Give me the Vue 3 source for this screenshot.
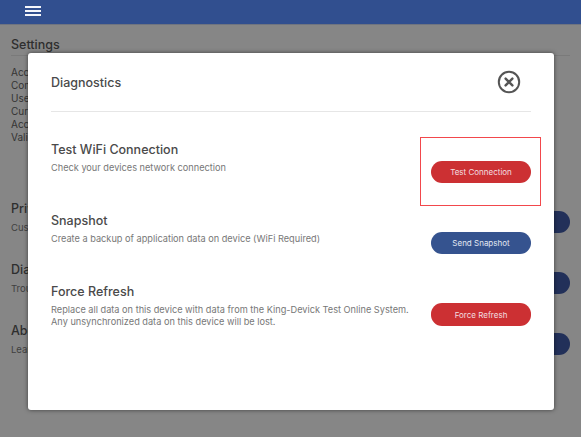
<script setup>
const bgRows = ['Account:', 'Company:', 'User:', 'Current Version:', 'Account Type:', 'Valid Until:']
const bgSections = [
  { title: 'Privacy', text: 'Customize privacy settings' },
  { title: 'Diagnostics', text: 'Troubleshoot your device' },
  { title: 'About', text: 'Learn more about this app' },
]
</script>

<template>
  <div class="page">
    <header class="topbar">
      <div class="burger"><span></span><span></span><span></span></div>
    </header>
    <main class="settings">
      <h1>Settings</h1>
      <ul class="info">
        <li v-for="r in bgRows" :key="r">{{ r }}</li>
      </ul>
      <section v-for="s in bgSections" :key="s.title" class="bg-section">
        <div>
          <h2>{{ s.title }}</h2>
          <p>{{ s.text }}</p>
        </div>
        <span class="bg-btn"></span>
      </section>
    </main>

    <div class="modal">
      <div class="modal-head">
        <h3>Diagnostics</h3>
        <svg class="close" width="24" height="24" viewBox="0 0 24 24" fill="none">
          <circle cx="12" cy="12" r="10.2" stroke="#555" stroke-width="2" />
          <path d="M8.6 8.6 15.4 15.4M15.4 8.6 8.6 15.4" stroke="#555" stroke-width="2.4" stroke-linecap="round" />
        </svg>
      </div>
      <div class="rows">
        <div class="row">
          <div class="copy">
            <h4>Test WiFi Connection</h4>
            <p>Check your devices network connection</p>
          </div>
          <div class="action">
            <button class="red">Test Connection</button>
            <span class="callout"></span>
          </div>
        </div>
        <div class="row">
          <div class="copy">
            <h4>Snapshot</h4>
            <p>Create a backup of application data on device (WiFi Required)</p>
          </div>
          <div class="action">
            <button class="blue">Send Snapshot</button>
          </div>
        </div>
        <div class="row">
          <div class="copy">
            <h4>Force Refresh</h4>
            <p>Replace all data on this device with data from the King-Devick Test Online System.<br />Any unsynchronized data on this device will be lost.</p>
          </div>
          <div class="action">
            <button class="red tall">Force Refresh</button>
          </div>
        </div>
      </div>
    </div>
  </div>
</template>

<style scoped>
.page {
  position: relative;
  width: 581px;
  height: 437px;
  overflow: hidden;
  background: #868686;
  font-family: Inter, "Liberation Sans", sans-serif;
  color: #2f2f2f;
}
h1, h2, h3, h4, p, ul { margin: 0; padding: 0; }
.topbar {
  height: 25px;
  background: #314f8f;
  border-bottom: 1px solid #6f7480;
  box-sizing: border-box;
  display: flex;
  align-items: center;
  padding-left: 25px;
}
.burger {
  width: 16px;
  display: flex;
  flex-direction: column;
  gap: 2px;
  margin-top: -2px;
}
.burger span { height: 2px; background: #f4f6fb; }
.settings { padding: 12px 11px 0; }
.settings h1 {
  font-size: 12.5px;
  font-weight: 500;
  line-height: 15px;
  color: #2e2e2e;
  padding-bottom: 3px;
  border-bottom: 1px solid #7a7a7a;
}
.info {
  list-style: none;
  margin-top: 10px;
  font-size: 10px;
  line-height: 13px;
  color: #333;
  height: 135px;
}
.bg-section {
  display: flex;
  justify-content: space-between;
  height: 61px;
}
.bg-section h2 { font-size: 12.5px; font-weight: 500; line-height: 16px; color: #2e2e2e; }
.bg-section p { font-size: 9.5px; line-height: 13px; margin-top: 4px; color: #3f3f3f; }
.bg-btn {
  width: 100px;
  height: 22px;
  margin-top: 10px;
  border-radius: 11px;
  background: #223059;
}
.modal {
  position: absolute;
  left: 28px;
  top: 53px;
  width: 526px;
  height: 357px;
  box-sizing: border-box;
  padding: 0 23px;
  background: #fff;
  border-radius: 3px;
  box-shadow: 0 0 4px rgba(0, 0, 0, .55);
}
.modal-head {
  height: 58px;
  margin-bottom: 29px;
  border-bottom: 1px solid #e6e6e6;
  display: flex;
  align-items: center;
  justify-content: space-between;
  padding-right: 10px;
}
.modal-head h3 { font-size: 12.5px; font-weight: 500; color: #4a4a4a; }
.rows { display: flex; flex-direction: column; gap: 29px; }
.row { display: flex; justify-content: space-between; }
.copy h4 { font-size: 12.5px; font-weight: 500; line-height: 18px; color: #4a4a4a; }
.copy p { font-size: 9.2px; line-height: 11.5px; margin-top: 3px; color: #777; }
.action { position: relative; padding-top: 20px; }
button {
  display: block;
  width: 100px;
  height: 22px;
  border: 0;
  padding: 0;
  border-radius: 11px;
  font: 400 8px Inter, "Liberation Sans", sans-serif;
  color: #f3dfe0;
}
button.tall { height: 23px; }
.red { background: #cc3033; }
.blue { background: #35538f; color: #e2e7f2; }
.callout {
  position: absolute;
  left: -11px;
  right: -10px;
  top: -4px;
  bottom: -23px;
  border: 1px solid #f2484c;
}
</style>
